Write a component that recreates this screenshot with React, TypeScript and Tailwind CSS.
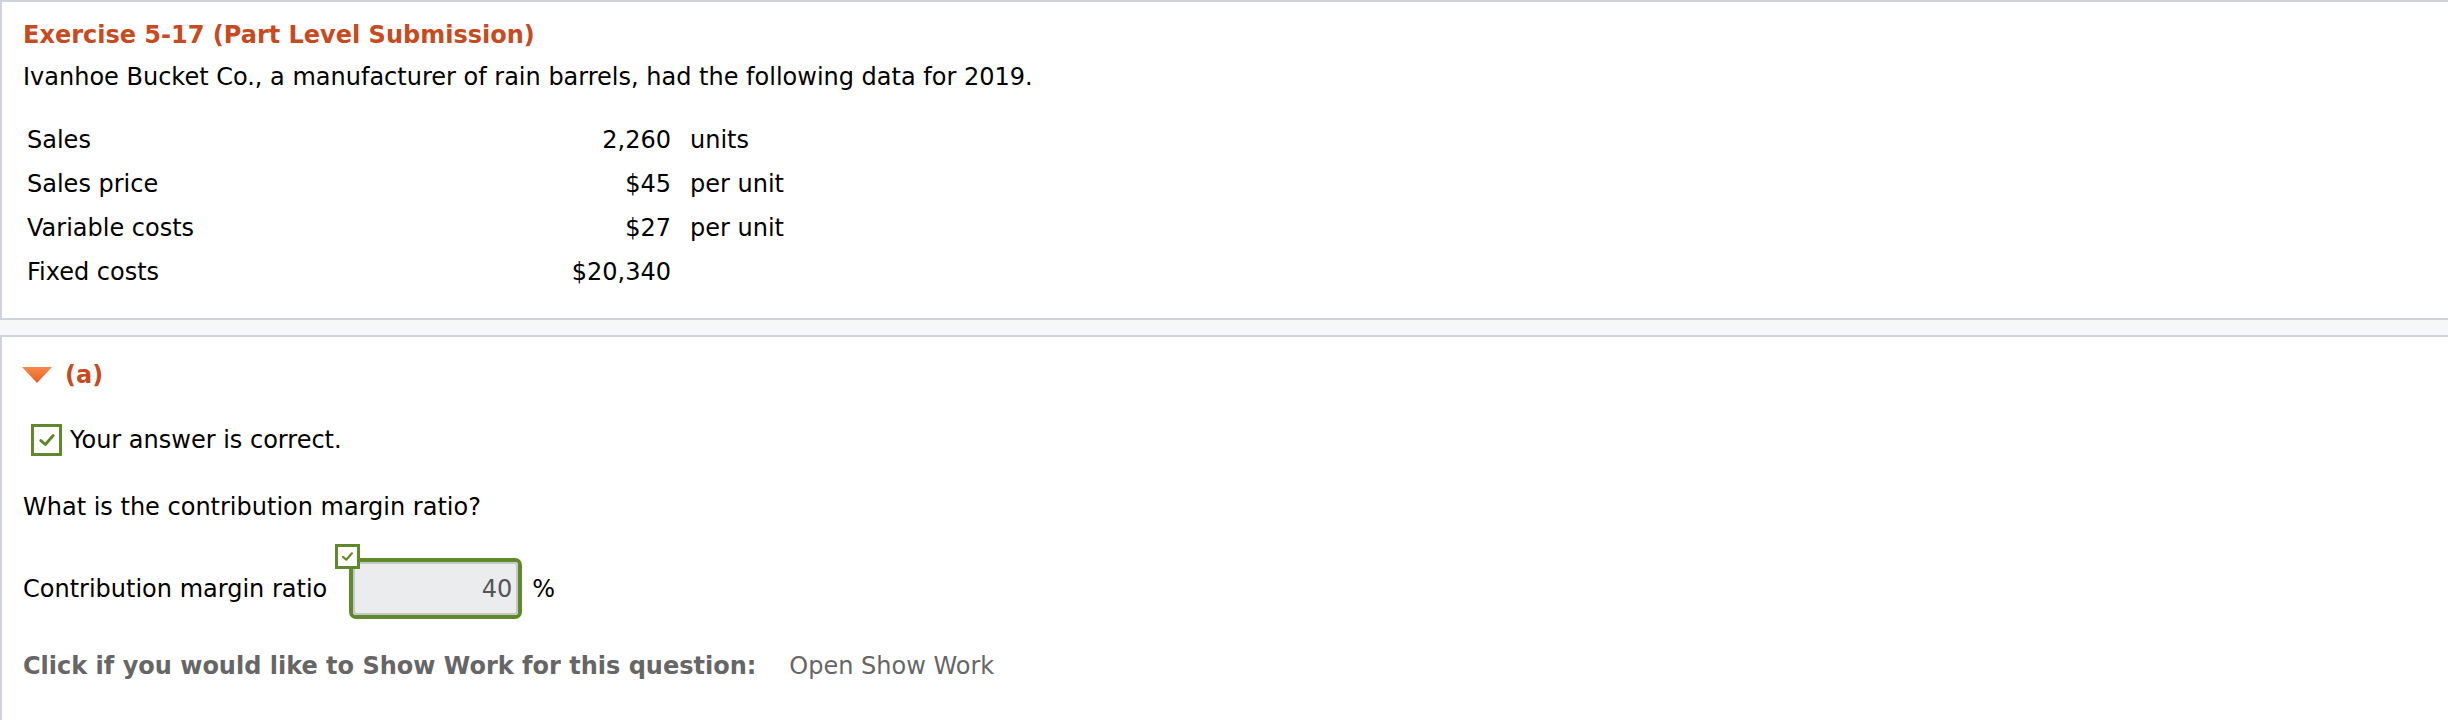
const rows = [
  { label: "Sales", value: "2,260", unit: "units" },
  { label: "Sales price", value: "$45", unit: "per unit" },
  { label: "Variable costs", value: "$27", unit: "per unit" },
  { label: "Fixed costs", value: "$20,340", unit: "" },
];

function CheckBox({ size }: { size: "lg" | "sm" }) {
  const box =
    size === "lg"
      ? "h-[32px] w-[31px] border-[3px]"
      : "h-[25px] w-[25px] border-[3px]";
  return (
    <span className={`flex items-center justify-center border-[#5f8a2c] bg-white ${box}`}>
      <svg
        viewBox="0 0 16 16"
        className={size === "lg" ? "h-[18px] w-[18px]" : "h-[13px] w-[13px]"}
        fill="none"
        stroke="#5f8a2c"
        strokeWidth="2.6"
        strokeLinecap="round"
        strokeLinejoin="round"
      >
        <polyline points="2.5,8.5 6.5,12 13.5,4" />
      </svg>
    </span>
  );
}

export default function App() {
  return (
    <div className="min-h-screen bg-white font-['DejaVu_Sans','Liberation_Sans',sans-serif] text-[24px] leading-[30px] text-black">
      <section className="border-b-2 border-l-2 border-t-2 border-[#cdd2dc] pb-[24px] pl-[21px] pt-[18px]">
        <h1 className="font-bold text-[#c74b1f]">Exercise 5-17 (Part Level Submission)</h1>
        <p className="mt-[12px]">Ivanhoe Bucket Co., a manufacturer of rain barrels, had the following data for 2019.</p>
        <div className="mt-[26px] pl-[4px]">
          {rows.map((row) => (
            <div key={row.label} className="flex h-[44px] items-center">
              <span className="w-[440px]">{row.label}</span>
              <span className="w-[204px] text-right">{row.value}</span>
              <span className="ml-[19px]">{row.unit}</span>
            </div>
          ))}
        </div>
      </section>

      <div className="h-[15px] bg-[#f6f7f9]" />

      <section className="border-l-2 border-t-2 border-[#cdd2dc] pb-[40px] pl-[20px] pt-[23px]">
        <div className="flex items-center">
          <svg viewBox="0 0 30 16" className="h-[16px] w-[30px]">
            <defs>
              <linearGradient id="tri" x1="0" y1="0" x2="0" y2="1">
                <stop offset="0" stopColor="#f58a4c" />
                <stop offset="1" stopColor="#e8601f" />
              </linearGradient>
            </defs>
            <polygon points="0,0 30,0 15,16" fill="url(#tri)" />
          </svg>
          <span className="ml-[13px] font-bold text-[#c74b1f]">(a)</span>
        </div>

        <div className="ml-[9px] mt-[34px] flex items-center gap-[8px]">
          <CheckBox size="lg" />
          <span>Your answer is correct.</span>
        </div>

        <p className="ml-[1px] mt-[36px]">What is the contribution margin ratio?</p>

        <div className="ml-[1px] mt-[36px] flex items-center">
          <span>Contribution margin ratio</span>
          <div className="relative ml-[22px]">
            <div className="absolute left-[-14px] top-[-14px] z-10">
              <CheckBox size="sm" />
            </div>
            <div className="h-[61px] w-[173px] rounded-[7px] border-[4px] border-[#5f8a2c]">
              <div className="flex h-full items-center justify-end rounded-[4px] border-2 border-[#c6c7c9] bg-[#ebecee] pr-[4px] text-[#555]">
                40
              </div>
            </div>
          </div>
          <span className="ml-[10px]">%</span>
        </div>

        <div className="ml-[1px] mt-[32px] flex items-center text-[#666]">
          <span className="font-bold">Click if you would like to Show Work for this question:</span>
          <span className="ml-[33px]">Open Show Work</span>
        </div>
      </section>
    </div>
  );
}
